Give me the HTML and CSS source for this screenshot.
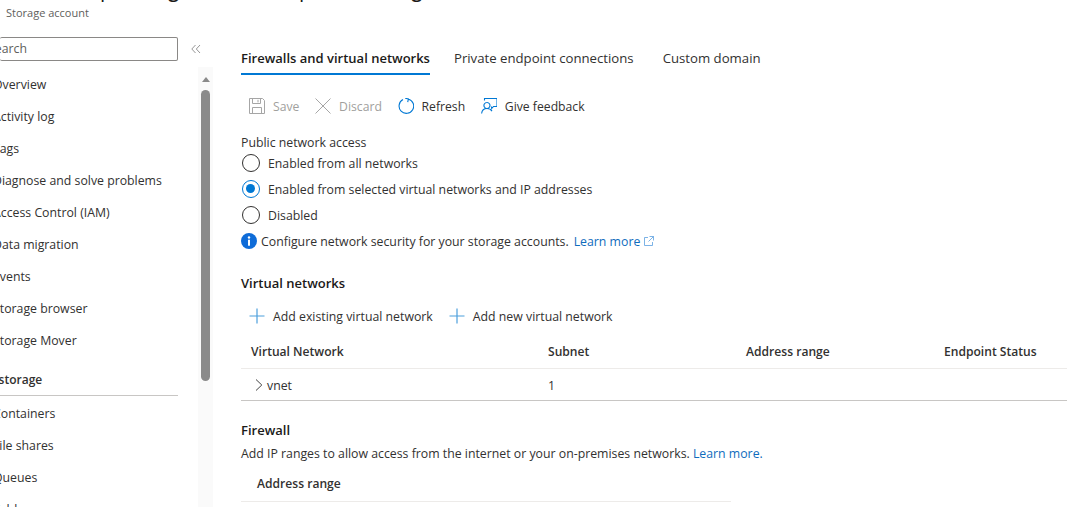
FILE: index.html
```html
<!DOCTYPE html>
<html lang="en">
<head>
<meta charset="utf-8">
<title>Networking</title>
<link rel="stylesheet" href="styles.css">
</head>
<body>
<header class="blade-head">
  <h1 class="blade-title">account1 | Settings - account1 | Networking</h1>
  <div class="blade-sub">Storage account</div>
</header>
<div class="blade">
  <aside class="side">
    <div class="side-top">
      <div class="search">Search</div>
      <svg class="collapse" viewBox="0 0 10 10" width="10" height="10"><path d="M4.500 1 .8 5l3.700 4M9 1 5.300 5 9 9" fill="none" stroke="#8a8a8a" stroke-width=".9"/></svg>
    </div>
    <div class="side-body">
      <nav class="menu">
        <div class="item">Overview</div>
        <div class="item">Activity log</div>
        <div class="item">Tags</div>
        <div class="item">Diagnose and solve problems</div>
        <div class="item">Access Control (IAM)</div>
        <div class="item">Data migration</div>
        <div class="item">Events</div>
        <div class="item">Storage browser</div>
        <div class="item">Storage Mover</div>
        <div class="group">Data storage</div>
        <div class="item">Containers</div>
        <div class="item">File shares</div>
        <div class="item">Queues</div>
        <div class="item">Tables</div>
      </nav>
      <div class="scroll">
        <div class="arrow"></div>
        <div class="thumb"></div>
      </div>
    </div>
  </aside>
  <main class="content">
    <div class="tabs">
      <div class="tab active">Firewalls and virtual networks</div>
      <div class="tab">Private endpoint connections</div>
      <div class="tab">Custom domain</div>
    </div>
    <div class="toolbar">
      <div class="tool off">
        <svg viewBox="0 0 16 16" width="16" height="16"><path d="M.5.5h13l2 2v13H.5zM3.500.5v5h8v-5M3.500 15.500v-6h9v6M9 1.800v2.600" fill="none" stroke="#a6a6a6"/></svg>
        <span>Save</span>
      </div>
      <div class="tool off">
        <svg viewBox="0 0 16 16" width="16" height="16"><path d="M.5.5l15 15M15.500.5l-15 15" fill="none" stroke="#a6a6a6"/></svg>
        <span>Discard</span>
      </div>
      <div class="tool">
        <svg viewBox="0 0 16 16" width="16" height="16"><path d="M5 1.600A7.300 7.300 0 1 0 10.200 1M9.700 4.200 10.400 1 7.200.2" fill="none" stroke="#0078d4" stroke-width="1.100"/></svg>
        <span>Refresh</span>
      </div>
      <div class="tool">
        <svg viewBox="0 0 16 16" width="16" height="16"><path d="M3.500 2.500V.5H16v8h-3.500l-1.800 2-.2-2M6 4.500a3 3 0 1 1-.1 0M.6 15.500c.4-3.500 2.500-5 5.400-5s4 1 5 2.600" fill="none" stroke="#0078d4" stroke-width="1.100"/></svg>
        <span>Give feedback</span>
      </div>
    </div>
    <div class="field-label">Public network access</div>
    <div class="radios">
      <div class="radio"><i class="dot"></i>Enabled from all networks</div>
      <div class="radio"><i class="dot on"></i>Enabled from selected virtual networks and IP addresses</div>
      <div class="radio"><i class="dot"></i>Disabled</div>
    </div>
    <div class="info">
      <svg viewBox="0 0 16 16" width="16" height="16"><circle cx="8" cy="8" r="8" fill="#0f6cd8"/><rect x="7" y="6.700" width="2" height="6" fill="#fff"/><circle cx="8" cy="4.500" r="1.200" fill="#fff"/></svg>
      <span>Configure network security for your storage accounts.</span>
      <a class="link">Learn more</a>
      <svg viewBox="0 0 10 10" width="10" height="10"><path d="M4 1.500H.5v8h8V6M5.500.5h4v4M9.500.5l-5 5" fill="none" stroke="#5a9fe0" stroke-width=".8"/></svg>
    </div>
    <h2 class="vnet-title">Virtual networks</h2>
    <div class="adds">
      <div class="add"><svg viewBox="0 0 16 16" width="16" height="16"><path d="M8 .5v15M.5 8h15" stroke="#4c9fdc" stroke-width="1.200"/></svg>Add existing virtual network</div>
      <div class="add"><svg viewBox="0 0 16 16" width="16" height="16"><path d="M8 .5v15M.5 8h15" stroke="#4c9fdc" stroke-width="1.200"/></svg>Add new virtual network</div>
    </div>
    <div class="vnet-table">
      <div class="row head">
        <div>Virtual Network</div><div>Subnet</div><div>Address range</div><div>Endpoint Status</div>
      </div>
      <div class="row body">
        <div class="vnet-cell"><svg viewBox="0 0 8 12" width="8" height="12"><path d="M1 .5 6.800 6 1 11.500" fill="none" stroke="#444"/></svg>vnet</div><div>1</div><div></div><div></div>
      </div>
    </div>
    <h2 class="fw-title">Firewall</h2>
    <div class="fw-desc">Add IP ranges to allow access from the internet or your on-premises networks. <a class="link">Learn more.</a></div>
    <div class="fw-head">Address range</div>
  </main>
</div>
</body>
</html>
```
FILE: styles.css
```css
* { box-sizing: border-box; }
html, body { margin: 0; height: 100%; }
body {
  width: 1067px;
  height: 507px;
  overflow: hidden;
  background: #fff;
  color: #323130;
  font-family: "Open Sans", "Noto Sans", sans-serif;
  font-size: 12.3px;
}
.blade-head { height: 36px; padding-left: 6px; overflow: hidden; }
.blade-title {
  margin: -25px 0 0 0;
  height: 30px;
  font-size: 19.500px;
  line-height: 30px;
  font-weight: 600;
  color: #1b1a19;
  white-space: nowrap;
}
.blade-sub { font-size: 11px; line-height: 14px; margin-top: 1px; color: #605e5c; }
.blade { display: flex; height: 471px; }
.side { width: 213px; flex: none; overflow: hidden; }
.side-top { display: flex; align-items: center; height: 24px; margin: 1px 0 6px; padding-right: 11px; justify-content: space-between; }
.search {
  width: 178px;
  height: 24px;
  border: 1px solid #8a8886;
  border-left: 0;
  border-radius: 2px;
  line-height: 22px;
  text-indent: -12px;
  color: #605e5c;
  overflow: hidden;
}
.collapse { margin-right: 1px; }
.side-body { display: flex; height: 440px; justify-content: space-between; }
.menu { width: 178px; flex: none; padding-top: 2px; white-space: nowrap; overflow: hidden; }
.item { height: 32px; line-height: 32px; margin-left: -7px; color: #323130; }
.group { height: 30px; line-height: 28px; margin: 9px 0 2px -32px; font-weight: 600; font-size: 12px; border-bottom: 1px solid #c8c6c4; }
.scroll { width: 15px; height: 100%; background: #fafafa; padding: 0 3px; flex: none; }
.arrow { width: 0; margin: 10px auto 0; border-left: 4.500px solid transparent; border-right: 4.500px solid transparent; border-bottom: 5px solid #8a8a8a; }
.thumb { width: 9px; margin: 8px auto 0; height: 291px; background: #8a8a8a; border-radius: 5px; }
.content { flex: 1; min-width: 0; padding: 0 0 0 28px; overflow: hidden; }
.tabs { display: flex; height: 39px; }
.tab { font-size: 13.2px; line-height: 34px; padding-top: 5px; margin-right: 29px; white-space: nowrap; }
.tab.active { font-size: 13px; font-weight: 600; color: #1b1a19; border-bottom: 2px solid #0078d4; margin-right: 24px; }
.toolbar { display: flex; height: 24px; margin: 19px 0 0 8px; align-items: center; font-size: 12.2px; }
.tool { display: flex; align-items: center; gap: 8px; margin-right: 15.700px; }
.tool.off { color: #a19f9d; }
.field-label { margin-top: 17px; line-height: 15px; }
.radio { display: flex; align-items: center; height: 26px; gap: 8px; }
.dot { width: 18px; height: 18px; margin-left: 1px; border-radius: 50%; border: 1.500px solid #323130; flex: none; }
.dot.on { border-color: #0078d4; position: relative; }
.dot.on::after { content: ""; position: absolute; left: 3px; top: 3px; width: 9px; height: 9px; border-radius: 50%; background: #0078d4; }
.info { display: flex; align-items: center; gap: 4px; height: 26px; }
.info a { margin-left: 1px; }
.link { color: #0f6cbd; }
.vnet-title { margin: 20px 0 0; font-size: 13px; line-height: 18px; font-weight: 600; color: #1b1a19; }
.adds { display: flex; margin: 12px 0 0 8px; height: 24px; gap: 16px; align-items: center; }
.add { display: flex; align-items: center; gap: 8px; }
.vnet-table { margin-top: 7px; width: 100%; }
.row { display: grid; grid-template-columns: 297px 198px 198px 1fr; padding-left: 10px; align-items: center; white-space: nowrap; }
.row.head { height: 34px; font-weight: 600; font-size: 12.1px; border-bottom: 1px solid #edebe9; }
.row.body { height: 32px; padding-top: 1px; border-bottom: 1px solid #c8c6c4; }
.vnet-cell { display: flex; align-items: center; gap: 4px; padding-left: 4px; }
.fw-title { margin: 20px 0 0; font-size: 13px; line-height: 18px; font-weight: 600; color: #1b1a19; }
.fw-desc { margin-top: 7px; line-height: 16px; white-space: nowrap; }
.fw-head { margin-top: 3px; width: 490px; height: 37px; line-height: 38px; padding-left: 16px; font-weight: 600; font-size: 12.1px; border-bottom: 1px solid #edebe9; }
```
